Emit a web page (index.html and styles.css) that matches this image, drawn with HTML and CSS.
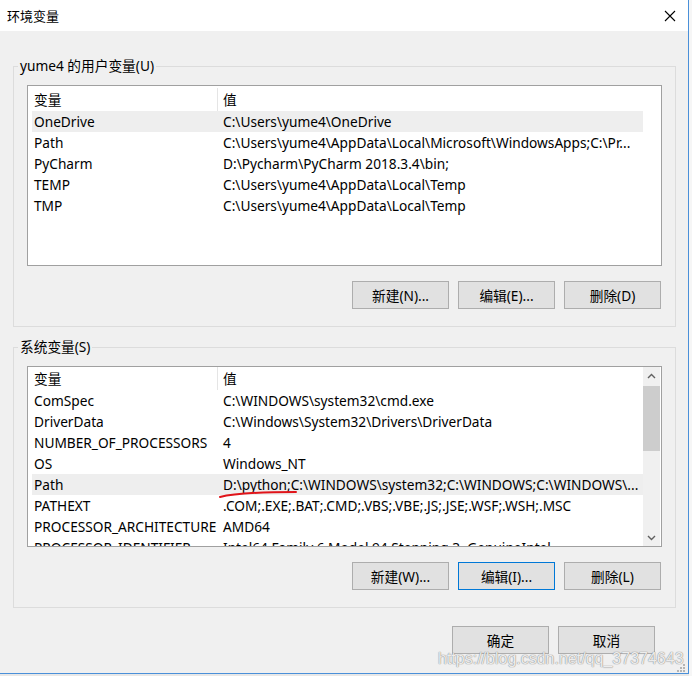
FILE: index.html
```html
<!DOCTYPE html>
<html lang="zh-CN">

<head>
    <meta charset="UTF-8">
    <meta name="viewport" content="width=device-width, initial-scale=1.0">
    <title>环境变量</title>
    <link rel="stylesheet" href="styles.css">
</head>

<body>
    <div class="screen">
        <div class="dialog">
            <div class="titlebar">
                <span class="title">环境变量</span>
                <svg class="close" width="12" height="12" viewBox="0 0 12 12">
                    <path d="M1 1 L11 11 M11 1 L1 11" stroke="#000" stroke-width="1.1" fill="none" />
                </svg>
            </div>

            <div class="content">
                <fieldset class="group">
                    <legend>yume4 的用户变量(U)</legend>
                    <div class="list">
                        <div class="list-rows">
                            <div class="row head"><span class="name">变量</span><span class="value">值</span></div>
                            <div class="row selected"><span class="name">OneDrive</span><span class="value">C:\Users\yume4\OneDrive</span></div>
                            <div class="row"><span class="name">Path</span><span class="value">C:\Users\yume4\AppData\Local\Microsoft\WindowsApps;C:\Pr...</span></div>
                            <div class="row"><span class="name">PyCharm</span><span class="value">D:\Pycharm\PyCharm 2018.3.4\bin;</span></div>
                            <div class="row"><span class="name">TEMP</span><span class="value">C:\Users\yume4\AppData\Local\Temp</span></div>
                            <div class="row"><span class="name">TMP</span><span class="value">C:\Users\yume4\AppData\Local\Temp</span></div>
                        </div>
                        <div class="scroll empty"></div>
                    </div>
                    <div class="buttons">
                        <button class="btn">新建(N)...</button>
                        <button class="btn">编辑(E)...</button>
                        <button class="btn">删除(D)</button>
                    </div>
                </fieldset>

                <fieldset class="group system">
                    <legend>系统变量(S)</legend>
                    <div class="list">
                        <div class="list-rows">
                            <div class="row head"><span class="name">变量</span><span class="value">值</span></div>
                            <div class="row"><span class="name">ComSpec</span><span class="value">C:\WINDOWS\system32\cmd.exe</span></div>
                            <div class="row"><span class="name">DriverData</span><span class="value">C:\Windows\System32\Drivers\DriverData</span></div>
                            <div class="row"><span class="name">NUMBER_OF_PROCESSORS</span><span class="value">4</span></div>
                            <div class="row"><span class="name">OS</span><span class="value">Windows_NT</span></div>
                            <div class="row selected marked">
                                <span class="name">Path</span><span class="value">D:\python;C:\WINDOWS\system32;C:\WINDOWS;C:\WINDOWS\...</span>
                                <svg class="underline" width="82" height="12" viewBox="0 0 82 12">
                                    <path d="M3 9 Q 22 4 79 4" stroke="#e0141a" stroke-width="2" fill="none" stroke-linecap="round" />
                                </svg>
                            </div>
                            <div class="row"><span class="name">PATHEXT</span><span class="value">.COM;.EXE;.BAT;.CMD;.VBS;.VBE;.JS;.JSE;.WSF;.WSH;.MSC</span></div>
                            <div class="row"><span class="name">PROCESSOR_ARCHITECTURE</span><span class="value">AMD64</span></div>
                            <div class="row"><span class="name">PROCESSOR_IDENTIFIER</span><span class="value">Intel64 Family 6 Model 94 Stepping 3, GenuineIntel</span></div>
                        </div>
                        <div class="scroll">
                            <div class="arrow">
                                <svg width="9" height="6" viewBox="0 0 9 6"><path d="M1 5 L4.5 1.5 L8 5" stroke="#606060" stroke-width="1.4" fill="none" /></svg>
                            </div>
                            <div class="thumb"></div>
                            <div class="track"></div>
                            <div class="arrow">
                                <svg width="9" height="6" viewBox="0 0 9 6"><path d="M1 1 L4.5 4.5 L8 1" stroke="#606060" stroke-width="1.4" fill="none" /></svg>
                            </div>
                        </div>
                    </div>
                    <div class="buttons">
                        <button class="btn">新建(W)...</button>
                        <button class="btn focused">编辑(I)...</button>
                        <button class="btn">删除(L)</button>
                    </div>
                </fieldset>

                <div class="buttons footer">
                    <button class="btn">确定</button>
                    <button class="btn">取消</button>
                </div>
            </div>

            <div class="watermark">https://blog.csdn.net/qq_37374643</div>
            <svg class="grip" width="9" height="9" viewBox="0 0 9 9">
                <rect x="6" y="0" width="2" height="2" fill="#b4b4b4" />
                <rect x="3" y="3" width="2" height="2" fill="#b4b4b4" />
                <rect x="6" y="3" width="2" height="2" fill="#b4b4b4" />
                <rect x="0" y="6" width="2" height="2" fill="#b4b4b4" />
                <rect x="3" y="6" width="2" height="2" fill="#b4b4b4" />
                <rect x="6" y="6" width="2" height="2" fill="#b4b4b4" />
            </svg>
        </div>
        <div class="edge"></div>
    </div>
</body>

</html>
```

FILE: styles.css
```css
body {
    margin: 0;
    font-family: "Noto Sans", "Noto Sans CJK SC", sans-serif;
    font-size: 13.7px;
    color: #000000;
    background-color: #e8e8e8;
}

.screen {
    display: flex;
    height: 676px;
    overflow: hidden;
}

.dialog {
    position: relative;
    box-sizing: border-box;
    width: 689px;
    height: 674px;
    background-color: #f0f0f0;
    border-right: 1px solid #4a90d9;
    border-bottom: 1px solid #4a90d9;
}

.edge {
    flex: 1;
    background-color: #f6f6f6;
}

.titlebar {
    height: 31px;
    background-color: #ffffff;
    display: flex;
    align-items: center;
    justify-content: space-between;
    padding: 0 12px 0 7px;
}

.title {
    font-size: 13px;
}

.content {
    padding: 26px 12px 0 13px;
}

.group {
    margin: 0;
    padding: 10px 0 17px;
    border: 1px solid #dcdcdc;
    min-width: 0;
}

.group legend {
    margin-left: 4px;
    padding: 0 2px;
    line-height: 18px;
}

.system {
    margin-top: 11px;
}

.list {
    display: flex;
    height: 181px;
    margin: 0 13px;
    box-sizing: border-box;
    border: 1px solid #a0a0a0;
    background-color: #ffffff;
    overflow: hidden;
}

.list-rows {
    flex: 1;
    min-width: 0;
    padding: 2px 0 0 4px;
    overflow: hidden;
}

.system .list-rows {
    padding-top: 0;
}

.row {
    position: relative;
    display: grid;
    grid-template-columns: 185px 1fr;
    height: 21px;
    line-height: 21px;
    white-space: nowrap;
}

.row .name {
    padding-left: 2px;
    overflow: hidden;
}

.row .value {
    padding-left: 6px;
    overflow: hidden;
}

.row.head {
    height: 23px;
    line-height: 23px;
}

.row.head .value {
    border-left: 1px solid #e5e5e5;
    padding-left: 5px;
}

.row.selected {
    background-color: #eeeeee;
}

.underline {
    position: absolute;
    left: 185px;
    top: 14px;
}

.scroll {
    width: 17px;
    margin-right: 1px;
    display: flex;
    flex-direction: column;
    background-color: #f0f0f0;
}

.scroll.empty {
    background-color: #ffffff;
}

.arrow {
    height: 17px;
    display: flex;
    align-items: center;
    justify-content: center;
}

.thumb {
    height: 65px;
    margin-top: 2px;
    background-color: #cdcdcd;
}

.track {
    flex: 1;
}

.buttons {
    display: flex;
    justify-content: flex-end;
    gap: 9px;
    margin: 15px 14px 0 13px;
}

.btn {
    width: 97px;
    height: 28px;
    padding: 0;
    box-sizing: border-box;
    border: 1px solid #adadad;
    background-color: #e1e1e1;
    font-family: "Noto Sans", "Noto Sans CJK SC", sans-serif;
    font-size: 13.7px;
    color: #000000;
}

.btn.focused {
    border-color: #0078d7;
}

.footer {
    margin: 18px 21px 0 0;
}

.watermark {
    position: absolute;
    left: 438px;
    top: 650px;
    font-family: "Liberation Sans", Arial, sans-serif;
    font-size: 16px;
    line-height: 18px;
    color: rgba(255, 255, 255, 0.85);
    text-shadow: 0 0 1px #8a8a8a, 0 0 1px #8a8a8a;
    white-space: nowrap;
}

.grip {
    position: absolute;
    left: 677px;
    top: 664px;
}
```
